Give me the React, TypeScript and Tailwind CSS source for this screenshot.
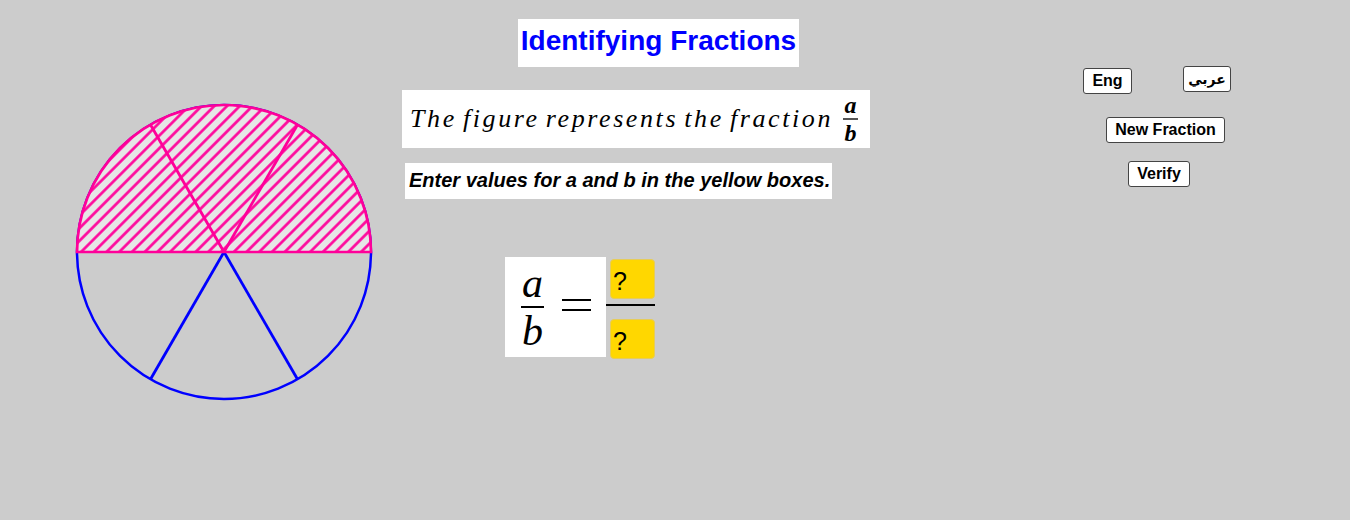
import React from "react";

const PINK = "#ff0099";
const BLUE = "#0000ff";

// center and radius of the pie, in page coordinates
const CX = 224;
const CY = 252;
const R = 147;

function pt(deg: number) {
  const a = (deg * Math.PI) / 180;
  return { x: CX + R * Math.cos(a), y: CY - R * Math.sin(a) };
}

function Pie() {
  const p60 = pt(60);
  const p120 = pt(120);
  const p240 = pt(240);
  const p300 = pt(300);
  return (
    <svg className="absolute left-0 top-0" width="400" height="420" viewBox="0 0 400 420">
      <defs>
        <pattern
          id="hatch"
          patternUnits="userSpaceOnUse"
          width="9"
          height="9"
          patternTransform="rotate(45)"
        >
          <line x1="1.5" y1="0" x2="1.5" y2="9" stroke={PINK} strokeWidth="2.6" />
        </pattern>
      </defs>
      <circle cx={CX} cy={CY} r={R} fill="none" stroke={BLUE} strokeWidth="2.5" />
      <line x1={CX} y1={CY} x2={p240.x} y2={p240.y} stroke={BLUE} strokeWidth="2.8" />
      <line x1={CX} y1={CY} x2={p300.x} y2={p300.y} stroke={BLUE} strokeWidth="2.8" />
      <path
        d={`M ${CX - R} ${CY} A ${R} ${R} 0 0 1 ${CX + R} ${CY} Z`}
        fill="#e6e6e6"
      />
      <path
        d={`M ${CX - R} ${CY} A ${R} ${R} 0 0 1 ${CX + R} ${CY} Z`}
        fill="url(#hatch)"
        stroke={PINK}
        strokeWidth="2.7"
      />
      <line x1={CX} y1={CY} x2={p60.x} y2={p60.y} stroke={PINK} strokeWidth="2.8" />
      <line x1={CX} y1={CY} x2={p120.x} y2={p120.y} stroke={PINK} strokeWidth="2.8" />
    </svg>
  );
}

function Btn({ label, className, arabic }: { label: string; className: string; arabic?: boolean }) {
  return (
    <button
      className={`absolute h-[26px] bg-white border border-[#444] rounded-[3px] flex items-center justify-center font-bold text-black ${
        arabic ? "text-[14px] font-['DejaVu_Sans',sans-serif]" : "text-[16px] font-['Liberation_Sans',Arial,sans-serif]"
      } ${className}`}
    >
      {label}
    </button>
  );
}

function AnswerBox({ className }: { className: string }) {
  return (
    <div
      className={`absolute w-[45px] h-[40px] bg-[#ffd700] border border-[#e6cc5a] rounded-[4px] flex items-end pl-[2px] pb-[4px] text-[25px] leading-none text-black font-['Liberation_Sans',Arial,sans-serif] ${className}`}
    >
      ?
    </div>
  );
}

export default function App() {
  return (
    <div className="relative w-[1350px] h-[520px] overflow-hidden bg-[#cccccc]">
      <Pie />

      {/* Title */}
      <div className="absolute left-[518px] top-[19px] w-[281px] h-[48px] bg-white flex items-center justify-center pb-[4px]">
        <span className="text-[28px] font-bold text-[#0000ff] font-['Liberation_Sans',Arial,sans-serif] leading-none">
          Identifying Fractions
        </span>
      </div>

      {/* LaTeX sentence */}
      <div className="absolute left-[402px] top-[90px] w-[468px] h-[58px] bg-white flex items-center pl-[8px]">
        <span className="italic text-[26px] tracking-[2.6px] text-black font-['Liberation_Serif','Times_New_Roman',serif] whitespace-nowrap [word-spacing:-3px] pb-[2px]">
          The figure represents the fraction
        </span>
        <div className="ml-[10px] flex flex-col items-center font-['Liberation_Serif',serif] italic font-bold text-black text-[24px] leading-none">
          <span className="leading-[20px]">a</span>
          <span className="w-[15px] h-[1.5px] bg-[#555] my-[3px]" />
          <span className="leading-[20px]">b</span>
        </div>
      </div>

      {/* Instructions */}
      <div className="absolute left-[405px] top-[163px] w-[427px] h-[36px] bg-white flex items-center pl-[4px] pb-[3px]">
        <span className="italic font-bold text-[20px] text-black font-['Liberation_Sans',Arial,sans-serif] whitespace-nowrap">
          Enter values for a and b in the yellow boxes.
        </span>
      </div>

      {/* a/b = */}
      <div className="absolute left-[505px] top-[257px] w-[101px] h-[100px] bg-white flex items-center pl-[16px] gap-[18px]">
        <div className="flex flex-col items-center italic text-black text-[42px] font-['Liberation_Serif','Times_New_Roman',serif] leading-none">
          <span className="leading-[40px]">a</span>
          <span className="w-[23px] h-[2px] bg-black my-[3px]" />
          <span className="leading-[40px]">b</span>
        </div>
        <div className="flex flex-col gap-[8px] mt-[-4px]">
          <span className="block w-[29px] h-[2px] bg-black" />
          <span className="block w-[29px] h-[2px] bg-black" />
        </div>
      </div>

      <AnswerBox className="left-[610px] top-[259px]" />
      <div className="absolute left-[606px] top-[304px] w-[49px] h-[2px] bg-black" />
      <AnswerBox className="left-[610px] top-[319px]" />

      {/* Buttons */}
      <Btn label="Eng" className="left-[1083px] top-[68px] w-[49px]" />
      <Btn label="عربي" arabic className="left-[1183px] top-[66px] w-[48px]" />
      <Btn label="New Fraction" className="left-[1106px] top-[117px] w-[119px]" />
      <Btn label="Verify" className="left-[1128px] top-[161px] w-[62px]" />
    </div>
  );
}
